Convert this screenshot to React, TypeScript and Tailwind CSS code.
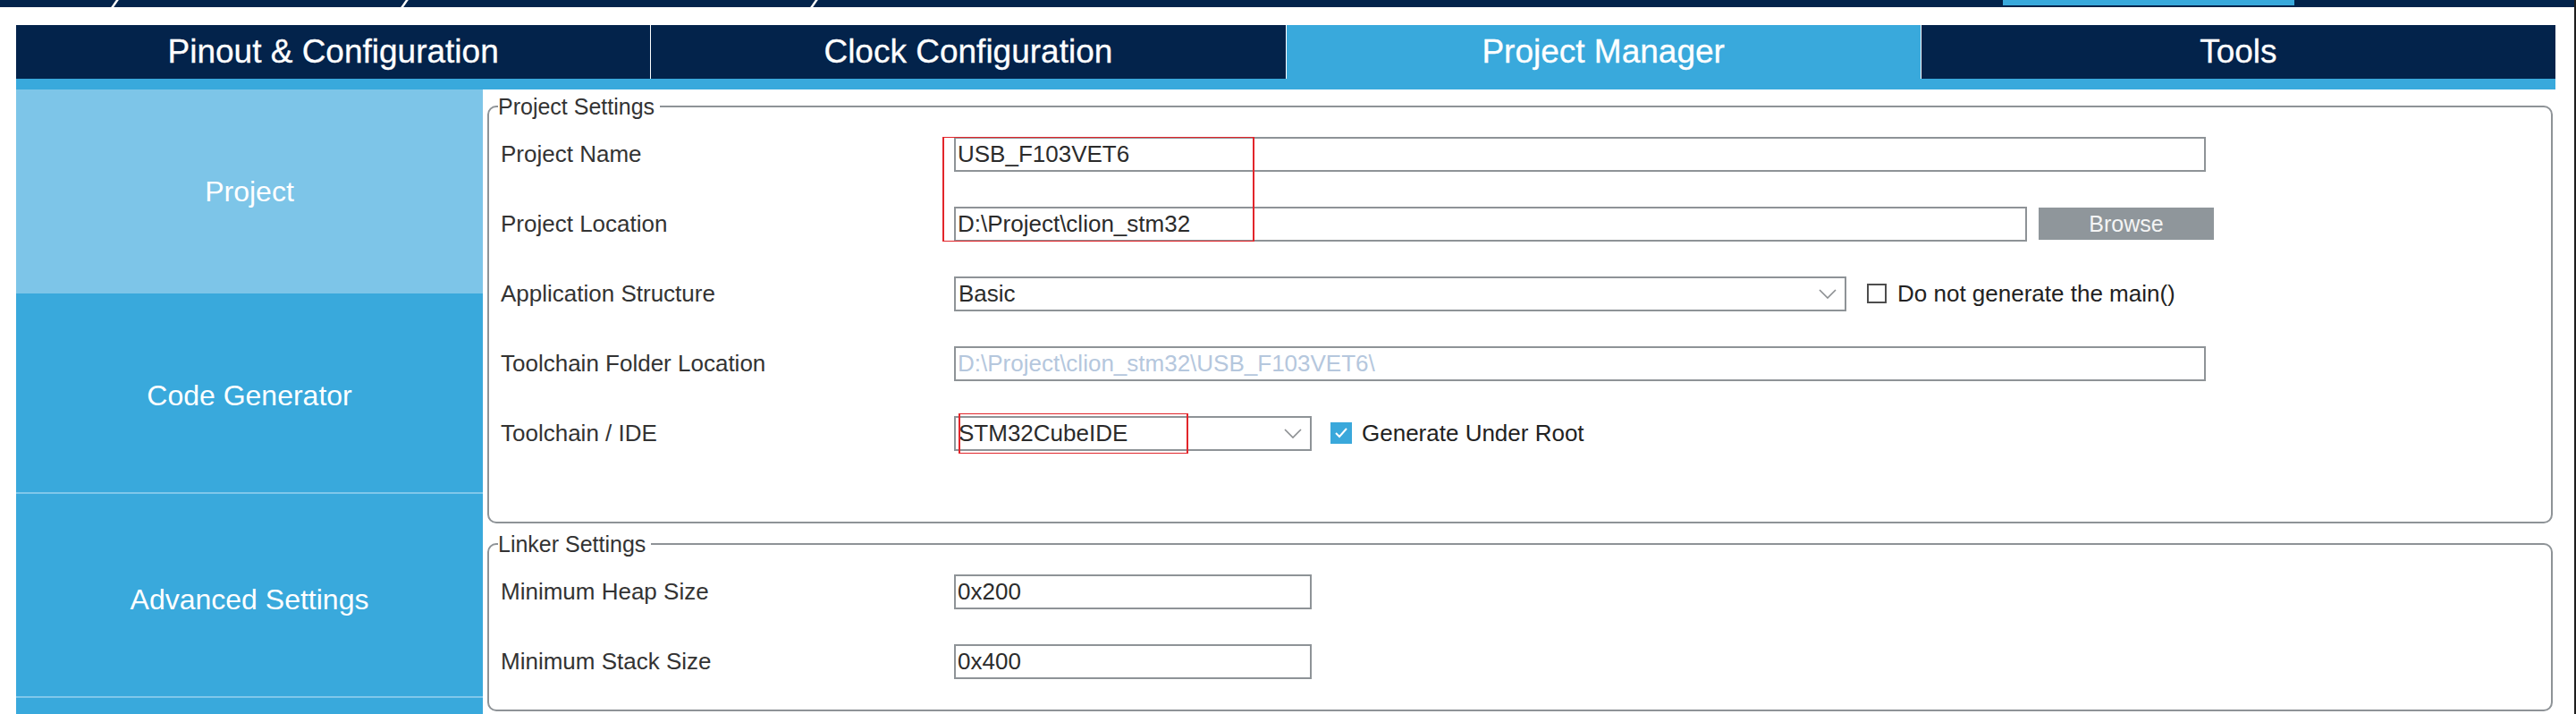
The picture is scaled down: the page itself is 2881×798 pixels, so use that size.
import React from 'react';

const navy = 'bg-[#03234b]';

function Chevron() {
  return (
    <svg width="20" height="11" viewBox="0 0 20 11" className="shrink-0">
      <polyline points="1,1 10,10 19,1" fill="none" stroke="#8a8d90" strokeWidth="1.6" />
    </svg>
  );
}

function TextBox({ value, width, muted }: { value: string; width: string; muted?: boolean }) {
  return (
    <div
      className={`${width} h-[39px] border-2 border-[#8e9397] bg-white flex items-center pl-[2px] text-[26px] leading-none whitespace-nowrap overflow-hidden ${
        muted ? 'text-[#b5c7dd]' : 'text-[#2b2b2b]'
      }`}
    >
      {value}
    </div>
  );
}

function Select({ value, width }: { value: string; width: string }) {
  return (
    <div
      className={`${width} h-[39px] border-2 border-[#8e9397] bg-white flex items-center justify-between pl-[3px] pr-[9px] text-[26px] leading-none text-[#2b2b2b]`}
    >
      <span>{value}</span>
      <Chevron />
    </div>
  );
}

function Row({ label, children }: { label: string; children: React.ReactNode }) {
  return (
    <div className="h-[78px] flex items-center">
      <div className="w-[510px] pl-[3px] text-[26px] leading-none text-[#333]">{label}</div>
      {children}
    </div>
  );
}

function SideItem({ label, active, h }: { label: string; active?: boolean; h: string }) {
  return (
    <div
      className={`${h} flex items-center justify-center text-white text-[32px] ${
        active ? 'bg-[#7dc5e8]' : 'bg-[#39a9dc]'
      }`}
    >
      {label}
    </div>
  );
}

export default function App() {
  const tabs = [
    { name: 'Pinout & Configuration' },
    { name: 'Clock Configuration' },
    { name: 'Project Manager', active: true },
    { name: 'Tools' },
  ];

  return (
    <div className="w-[2881px] h-[798px] overflow-hidden bg-white flex font-['Liberation_Sans',Arial,sans-serif]">
      <div className="w-[2879px] flex flex-col">
        {/* breadcrumb strip */}
        <div className={`h-[8px] flex items-start ${navy}`}>
          <div className="w-[127px]" />
          <div className="w-[3px] h-[8px] bg-white -skew-x-[35deg]" />
          <div className="w-[321px]" />
          <div className="w-[3px] h-[8px] bg-white -skew-x-[35deg]" />
          <div className="w-[455px]" />
          <div className="w-[3px] h-[8px] bg-white -skew-x-[35deg]" />
          <div className="w-[1328px]" />
          <div className="w-[326px] h-[6px] bg-[#39a9dc]" />
        </div>

        {/* tabs */}
        <div className="mt-[20px] ml-[18px] w-[2840px] h-[60px] flex gap-px bg-white">
          {tabs.map((t) => (
            <div
              key={t.name}
              className={`flex-1 flex items-center justify-center text-white text-[37px] [-webkit-text-stroke:0.3px_white] ${
                t.active ? 'bg-[#39a9dc]' : navy
              }`}
            >
              {t.name}
            </div>
          ))}
        </div>
        <div className="ml-[18px] w-[2840px] h-[12px] bg-[#39a9dc]" />

        {/* body */}
        <div className="ml-[18px] h-[698px] flex gap-[5px]">
          <div className="w-[522px] flex flex-col">
            <SideItem label="Project" active h="h-[228px]" />
            <SideItem label="Code Generator" h="h-[222px] pt-[6px]" />
            <div className="h-[2px] bg-[#80c7ea]" />
            <SideItem label="Advanced Settings" h="h-[226px] pt-[10px]" />
            <div className="h-[2px] bg-[#80c7ea]" />
            <div className="flex-1 bg-[#39a9dc]" />
          </div>

          <div className="relative w-[2310px] flex flex-col">
            <fieldset className="mt-[5px] border-2 border-[#8e9397] rounded-[10px] px-[10px] pb-[60px]">
              <legend className="text-[25px] leading-[28px] text-[#333] pr-[6px]">Project Settings</legend>
              <Row label="Project Name">
                <TextBox value="USB_F103VET6" width="w-[1400px]" />
              </Row>
              <Row label="Project Location">
                <TextBox value="D:\Project\clion_stm32" width="w-[1200px]" />
                <button className="ml-[13px] w-[196px] h-[36px] bg-[#8f969b] text-[#f4f4f4] text-[25px] leading-none">
                  Browse
                </button>
              </Row>
              <Row label="Application Structure">
                <Select value="Basic" width="w-[998px]" />
                <div className="ml-[23px] w-[22px] h-[22px] border-2 border-[#4d4d4d] bg-white" />
                <span className="ml-[12px] text-[26px] leading-none text-[#222]">Do not generate the main()</span>
              </Row>
              <Row label="Toolchain Folder Location">
                <TextBox value="D:\Project\clion_stm32\USB_F103VET6\" width="w-[1400px]" muted />
              </Row>
              <Row label="Toolchain / IDE">
                <Select value="STM32CubeIDE" width="w-[400px]" />
                <div className="ml-[21px] w-[24px] h-[24px] bg-[#3aa8db] flex items-center justify-center">
                  <svg width="16" height="14" viewBox="0 0 16 14">
                    <polyline points="2,7 6,11 14,2" fill="none" stroke="white" strokeWidth="2" />
                  </svg>
                </div>
                <span className="ml-[11px] text-[26px] leading-none text-[#222]">Generate Under Root</span>
              </Row>
            </fieldset>

            <fieldset className="mt-[9px] border-2 border-[#8e9397] rounded-[10px] px-[10px] pb-[15px]">
              <legend className="text-[25px] leading-[28px] text-[#333] pr-[6px]">Linker Settings</legend>
              <Row label="Minimum Heap Size">
                <TextBox value="0x200" width="w-[400px]" />
              </Row>
              <Row label="Minimum Stack Size">
                <TextBox value="0x400" width="w-[400px]" />
              </Row>
            </fieldset>

            {/* red annotation boxes */}
            <div className="absolute left-[509px] top-[53px] w-[349px] h-[117px] border-y border-x-2 border-[#e2262b]" />
            <div className="absolute left-[527px] top-[362px] w-[257px] h-[45px] border-y border-x-2 border-[#e2262b]" />
          </div>
        </div>
      </div>
      <div className="w-[2px] h-full bg-[#1e1e1e]" />
    </div>
  );
}
